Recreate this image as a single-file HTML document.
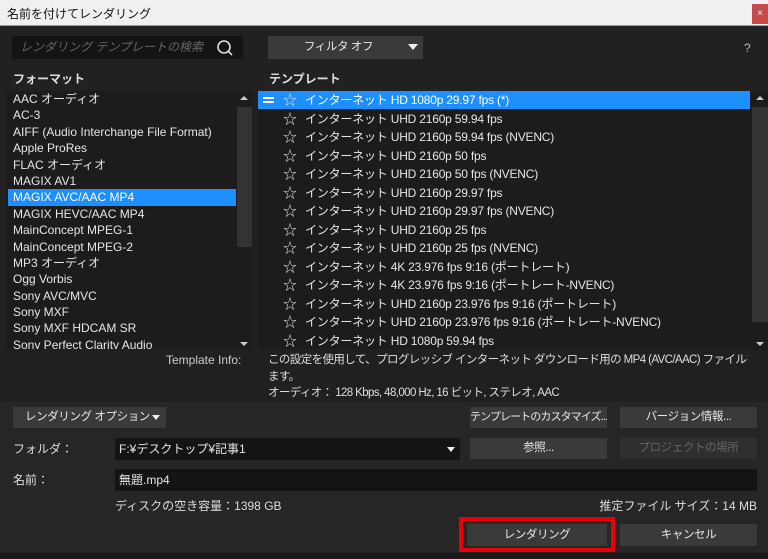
<!DOCTYPE html>
<html><head><meta charset="utf-8"><style>
*{margin:0;padding:0;box-sizing:border-box}
body{width:768px;height:559px;overflow:hidden;background:#262626;font-family:"Liberation Sans","Noto Sans CJK JP",sans-serif;font-size:12px;color:#e6e6e6;position:relative}
.a{position:absolute;white-space:nowrap}
.btn{position:absolute;background:#3a3a3a;color:#e8e8e8;text-align:center;font-size:11.5px;white-space:nowrap;overflow:hidden;letter-spacing:-0.4px}
.list div{height:16.4px;line-height:16.4px;padding-left:5px}
.tl div{height:18.5px;line-height:18.5px;padding-left:26px;position:relative;letter-spacing:-0.2px}
.tl div:before{content:"☆";position:absolute;left:4px;font-size:14px;color:#ddd}
</style></head><body>
<div class="a" style="left:0;top:0;width:768px;height:26px;background:#f0f0f0;border-bottom:1px solid #9a9a9a"></div>
<div class="a" style="left:7px;top:5px;color:#111;font-size:12px">名前を付けてレンダリング</div>
<div class="a" style="left:752px;top:4px;width:16px;height:20px;background:#c94a4a;color:#fff;text-align:center;line-height:20px;font-size:10px">×</div>
<div class="a" style="left:0;top:27px;width:768px;height:532px;background:#212121"></div>
<div class="a" style="left:12px;top:36px;width:231px;height:23px;background:#141414;color:#666;font-style:italic;padding-left:8px;line-height:23px">レンダリング テンプレートの検索</div>
<svg class="a" style="left:216px;top:39px" width="18" height="18"><circle cx="8" cy="8" r="6" fill="none" stroke="#ddd" stroke-width="1.6"/><line x1="12.5" y1="12.5" x2="16" y2="16" stroke="#ddd" stroke-width="1.6"/></svg>
<div class="btn" style="left:268px;top:36px;width:155px;height:23px;line-height:23px;padding-right:14px">フィルタ オフ</div>
<div class="a" style="left:408px;top:44px;border:5px solid transparent;border-top:6px solid #eee;border-bottom:0"></div>
<div class="a" style="left:744px;top:41px;color:#bbb">?</div>
<div class="a" style="left:13px;top:70px;font-weight:bold;color:#ddd">フォーマット</div>
<div class="a" style="left:269px;top:70px;font-weight:bold;color:#ddd">テンプレート</div>
<div class="a" style="left:6px;top:91px;width:247px;height:258px;background:#1c1c1c"></div>
<div class="a list" style="left:8px;top:91px;width:228px;height:258px;overflow:hidden">
<div>AAC オーディオ</div><div>AC-3</div><div>AIFF (Audio Interchange File Format)</div><div>Apple ProRes</div><div>FLAC オーディオ</div><div>MAGIX AV1</div><div style="background:#1e8fff;color:#fff">MAGIX AVC/AAC MP4</div><div>MAGIX HEVC/AAC MP4</div><div>MainConcept MPEG-1</div><div>MainConcept MPEG-2</div><div>MP3 オーディオ</div><div>Ogg Vorbis</div><div>Sony AVC/MVC</div><div>Sony MXF</div><div>Sony MXF HDCAM SR</div><div>Sony Perfect Clarity Audio</div>
</div>
<div class="a" style="left:237px;top:107px;width:15px;height:140px;background:#333"></div>
<div class="a" style="left:240px;top:96px;border:4px solid transparent;border-bottom:4px solid #ccc;border-top:0"></div>
<div class="a" style="left:240px;top:342px;border:4px solid transparent;border-top:4px solid #ccc;border-bottom:0"></div>
<div class="a" style="left:258px;top:91px;width:510px;height:258px;background:#1c1c1c"></div>
<div class="a" style="left:258px;top:91px;width:492px;height:18px;background:#1e8fff"></div>
<div class="a" style="left:263px;top:97px;width:11px;height:2px;background:#fff;box-shadow:0 4px 0 #fff"></div>
<div class="a tl" style="left:279px;top:91px;width:470px;height:258px;overflow:hidden">
<div style="color:#fff">インターネット HD 1080p 29.97 fps (*)</div><div>インターネット UHD 2160p 59.94 fps</div><div>インターネット UHD 2160p 59.94 fps (NVENC)</div><div>インターネット UHD 2160p 50 fps</div><div>インターネット UHD 2160p 50 fps (NVENC)</div><div>インターネット UHD 2160p 29.97 fps</div><div>インターネット UHD 2160p 29.97 fps (NVENC)</div><div>インターネット UHD 2160p 25 fps</div><div>インターネット UHD 2160p 25 fps (NVENC)</div><div>インターネット 4K 23.976 fps 9:16 (ポートレート)</div><div>インターネット 4K 23.976 fps 9:16 (ポートレート-NVENC)</div><div>インターネット UHD 2160p 23.976 fps 9:16 (ポートレート)</div><div>インターネット UHD 2160p 23.976 fps 9:16 (ポートレート-NVENC)</div><div>インターネット HD 1080p 59.94 fps</div>
</div>
<div class="a" style="left:752px;top:107px;width:16px;height:215px;background:#333"></div>
<div class="a" style="left:756px;top:96px;border:4px solid transparent;border-bottom:4px solid #ccc;border-top:0"></div>
<div class="a" style="left:756px;top:342px;border:4px solid transparent;border-top:4px solid #ccc;border-bottom:0"></div>
<div class="a" style="left:0;top:349px;width:768px;height:53px;background:#202020"></div>
<div class="a" style="left:166px;top:353px;color:#ccc">Template Info:</div>
<div class="a" style="left:268px;top:352px;width:480px;overflow:hidden;line-height:16.5px;color:#ddd;font-size:11.5px;letter-spacing:-0.6px">この設定を使用して、プログレッシブ インターネット ダウンロード用の MP4 (AVC/AAC) ファイルを作成し<br>ます。<br>オーディオ： 128 Kbps, 48,000 Hz, 16 ビット, ステレオ, AAC</div>
<div class="a" style="left:0;top:402px;width:768px;height:150px;background:#262626"></div>
<div class="btn" style="left:13px;top:407px;width:153px;height:21px;line-height:21px;text-align:left;padding-left:12px">レンダリング オプション</div>
<div class="a" style="left:152px;top:415px;border:4px solid transparent;border-top:5px solid #eee;border-bottom:0"></div>
<div class="btn" style="left:470px;top:407px;width:137px;height:21px;line-height:21px;letter-spacing:-0.9px;font-size:11px">テンプレートのカスタマイズ...</div>
<div class="btn" style="left:620px;top:407px;width:137px;height:21px;line-height:21px">バージョン情報...</div>
<div class="a" style="left:13px;top:440px;color:#ddd">フォルダ：</div>
<div class="a" style="left:115px;top:438px;width:345px;height:22px;background:#141414;line-height:22px;padding-left:4px">F:¥デスクトップ¥記事1</div>
<div class="a" style="left:447px;top:447px;border:4px solid transparent;border-top:5px solid #eee;border-bottom:0"></div>
<div class="btn" style="left:470px;top:438px;width:137px;height:21px;line-height:21px">参照...</div>
<div class="btn" style="left:620px;top:438px;width:137px;height:21px;line-height:21px;background:#2f2f2f;color:#666">プロジェクトの場所</div>
<div class="a" style="left:13px;top:471px;color:#ddd">名前：</div>
<div class="a" style="left:115px;top:469px;width:642px;height:22px;background:#141414;line-height:22px;padding-left:4px">無題.mp4</div>
<div class="a" style="left:115px;top:497px;color:#ddd">ディスクの空き容量：1398 GB</div>
<div class="a" style="right:11px;top:497px;color:#ddd">推定ファイル サイズ：14 MB</div>
<div class="a" style="left:459px;top:517px;width:156px;height:35px;border:4px solid #e8000a"></div>
<div class="btn" style="left:467px;top:524px;width:140px;height:22px;line-height:22px">レンダリング</div>
<div class="btn" style="left:620px;top:524px;width:137px;height:22px;line-height:22px">キャンセル</div>
<div class="a" style="left:0;top:553px;width:768px;height:6px;background:#1a1a1a"></div>
</body></html>
